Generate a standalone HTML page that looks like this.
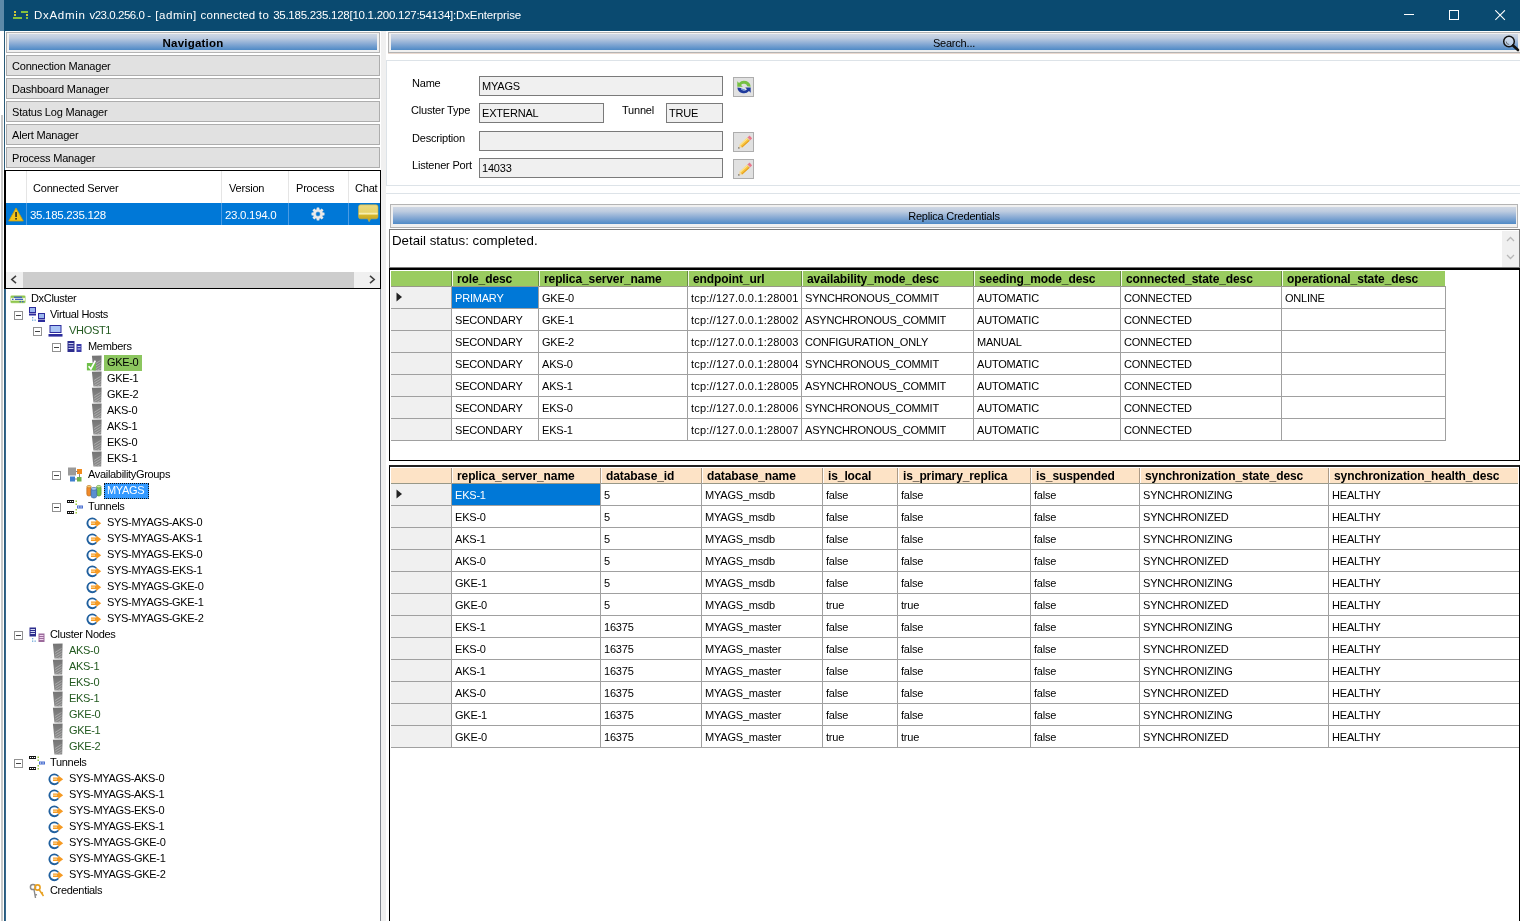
<!DOCTYPE html><html><head><meta charset="utf-8"><title>DxAdmin</title><style>
*{box-sizing:border-box;margin:0;padding:0}
html,body{width:1520px;height:921px;overflow:hidden;background:#fff}
body{will-change:transform;font-family:"Liberation Sans",sans-serif;font-size:11px;color:#000;position:relative;letter-spacing:-0.2px}
.a{position:absolute;white-space:nowrap}
.t{position:absolute;white-space:nowrap;line-height:14px;height:14px}
#title{left:4px;top:0;width:1516px;height:31px;background:#0a4a70}
#title .tx{left:30px;top:7px;color:#fff;font-size:11.5px;letter-spacing:0;line-height:16px}
.hdr{border:1px solid #b4b4b4;background:#f0f0f0}
.hdr .g{position:absolute;left:2px;right:2px;top:1px;bottom:2px;background:linear-gradient(#d0d8e4 0%,#becce0 25%,#88aad4 62%,#4f8ac6 100%)}
.nav{left:6px;width:374px;height:21px;border:1px solid #adadad;background:#e1e1e1}
.nav span{position:absolute;left:5px;top:3px;line-height:14px}
.tb{border:1px solid #7a7a7a;background:#f0f0f0;height:20px}
.tb span{position:absolute;left:2px;top:2px;line-height:14px}
.btn{border:1px solid #adadad;background:#e1e1e1;width:21px;height:20px}
</style></head><body>
<svg width="0" height="0" style="position:absolute"><defs><linearGradient id="ng" x1="0" y1="0" x2="0" y2="1"><stop offset="0" stop-color="#747474"/><stop offset="1" stop-color="#8c8c8c"/></linearGradient></defs></svg>
<div class="a" style="left:0;top:0;width:4px;height:31px;background:#5d8aa8"></div>
<div class="a" style="left:1px;top:115px;width:2px;height:806px;background:#c9c9c9"></div>
<div class="a" style="left:4px;top:31px;width:1px;height:890px;background:#2a5a78"></div>
<div class="a" style="left:4px;top:170px;width:2px;height:119px;background:#000"></div>
<div class="a" style="left:4px;top:289px;width:1px;height:632px;background:#2a5a78"></div>
<div id="title" class="a">
<svg class="a" style="left:8px;top:10px" width="16" height="10" viewBox="0 0 16 10"><g fill="#84c03c"><rect x="2" y="1" width="2" height="2" fill="#cfc63a"/><rect x="2" y="4" width="2" height="2" fill="#cfc63a"/><rect x="1" y="7" width="9" height="2"/><rect x="9" y="1" width="7" height="2"/><rect x="14" y="4" width="2" height="2" fill="#cfc63a"/><rect x="14" y="7" width="2" height="2"/></g></svg>
<div class="a tx" style="white-space:pre"><span style="letter-spacing:0.69px">DxAdmin </span><span style="letter-spacing:-0.46px">v23.0.256.0 </span><span style="letter-spacing:0.55px">- [admin] </span><span style="letter-spacing:0.2px">connected </span><span style="letter-spacing:0.5px">to </span><span style="letter-spacing:-0.26px">35.185.235.128[10.1.200.127:54134]</span><span style="letter-spacing:-0.12px">:DxEnterprise</span></div>
<svg class="a" style="left:1400px;top:8px" width="12" height="12"><path d="M0 6.5h10" stroke="#fff" stroke-width="1"/></svg>
<svg class="a" style="left:1445px;top:10px" width="12" height="12"><rect x="0.5" y="0.5" width="9" height="9" fill="none" stroke="#fff"/></svg>
<svg class="a" style="left:1491px;top:10px" width="12" height="12"><path d="M0.3 0.3l9.6 9.6M9.9 0.3l-9.6 9.6" stroke="#fff" stroke-width="1.1"/></svg>
</div>
<div class="a hdr" style="left:6px;top:32px;width:374px;height:21px"><div class="g"></div><div class="a" style="left:0;right:0;top:3px;text-align:center;font-weight:bold;font-size:11.5px;line-height:15px;letter-spacing:0.2px">Navigation</div></div>
<div class="a nav" style="top:55px"><span>Connection Manager</span></div>
<div class="a nav" style="top:78px"><span>Dashboard Manager</span></div>
<div class="a nav" style="top:101px"><span>Status Log Manager</span></div>
<div class="a nav" style="top:124px"><span>Alert Manager</span></div>
<div class="a nav" style="top:147px"><span>Process Manager</span></div>
<div class="a" style="left:5px;top:170px;width:376px;height:119px;border:1px solid #000;background:#fff">
<div class="a" style="left:20px;top:0;width:1px;height:32px;background:#e5e5e5"></div>
<div class="a" style="left:215px;top:0;width:1px;height:32px;background:#e5e5e5"></div>
<div class="a" style="left:282px;top:0;width:1px;height:32px;background:#e5e5e5"></div>
<div class="a" style="left:342px;top:0;width:1px;height:32px;background:#e5e5e5"></div>
<div class="t" style="left:27px;top:10px">Connected Server</div>
<div class="t" style="left:223px;top:10px">Version</div>
<div class="t" style="left:290px;top:10px">Process</div>
<div class="t" style="left:349px;top:10px">Chat</div>
<div class="a" style="left:0;top:32px;width:374px;height:22px;background:#0078d7"></div>
<div class="a" style="left:20px;top:32px;width:1px;height:22px;background:#4a9be3"></div>
<div class="a" style="left:215px;top:32px;width:1px;height:22px;background:#4a9be3"></div>
<div class="a" style="left:282px;top:32px;width:1px;height:22px;background:#4a9be3"></div>
<div class="a" style="left:342px;top:32px;width:1px;height:22px;background:#4a9be3"></div>
<div class="t" style="left:24px;top:37px;color:#fff;font-size:11.5px;letter-spacing:-0.3px">35.185.235.128</div>
<div class="t" style="left:219px;top:37px;color:#fff;font-size:11.5px;letter-spacing:-0.3px">23.0.194.0</div>
<svg class="a" style="left:2px;top:36px" width="16" height="15" viewBox="0 0 16 15"><path d="M8 1L15.3 14H0.7Z" fill="#f5c518" stroke="#c79a0a" stroke-width="0.8" stroke-linejoin="round"/><rect x="7.3" y="5" width="1.5" height="5" fill="#222"/><rect x="7.3" y="11" width="1.5" height="1.6" fill="#222"/></svg>
<svg class="a" style="left:305px;top:36px" width="14" height="14" viewBox="0 0 14 14"><g fill="#e9e9e9"><g><rect x="5.6" y="0.5" width="2.8" height="3" rx="0.4"/><rect x="5.6" y="10.5" width="2.8" height="3" rx="0.4"/><rect x="0.5" y="5.6" width="3" height="2.8" rx="0.4"/><rect x="10.5" y="5.6" width="3" height="2.8" rx="0.4"/></g><g transform="rotate(45 7 7)"><rect x="5.6" y="0.5" width="2.8" height="3" rx="0.4"/><rect x="5.6" y="10.5" width="2.8" height="3" rx="0.4"/><rect x="0.5" y="5.6" width="3" height="2.8" rx="0.4"/><rect x="10.5" y="5.6" width="3" height="2.8" rx="0.4"/></g></g><circle cx="7" cy="7" r="3.5" fill="none" stroke="#e9e9e9" stroke-width="2.6"/><circle cx="7" cy="7" r="2.1" fill="none" stroke="#9db9d6" stroke-width="0.5"/></svg>
<svg class="a" style="left:352px;top:33px" width="21" height="19" viewBox="0 0 21 19"><defs><linearGradient id="cg" x1="0" y1="0" x2="0" y2="1"><stop offset="0" stop-color="#e9da85"/><stop offset="0.44" stop-color="#e6d36a"/><stop offset="0.50" stop-color="#f7f0b8"/><stop offset="0.56" stop-color="#f3e48c"/><stop offset="0.60" stop-color="#d4b62e"/><stop offset="1" stop-color="#c2a01a"/></linearGradient></defs><path d="M2.5 0.8h15.5a2 2 0 0 1 2 2v10a2 2 0 0 1-2 2h-5.3l-1.6 3-1.4-3H2.5a2 2 0 0 1-2-2v-10a2 2 0 0 1 2-2z" fill="url(#cg)" stroke="#c9b040" stroke-width="0.6"/></svg>
<div class="a" style="left:0;top:101px;width:374px;height:16px;background:#f0f0f0"></div>
<div class="a" style="left:17px;top:101px;width:331px;height:16px;background:#cdcdcd"></div>
<svg class="a" style="left:4px;top:104px" width="8" height="9"><path d="M6 0.8L1.8 4.5L6 8.2" fill="none" stroke="#404040" stroke-width="1.6"/></svg>
<svg class="a" style="left:362px;top:104px" width="8" height="9"><path d="M2 0.8L6.2 4.5L2 8.2" fill="none" stroke="#404040" stroke-width="1.6"/></svg>
</div>
<div class="a" style="left:5px;top:289px;width:376px;height:640px;border:1px solid #828790;border-top:none;border-left-color:#33678f;background:#fff"></div>
<div class="a" style="left:10px;top:291px;width:16px;height:16px"><svg width="16" height="16" viewBox="0 0 16 16"><rect x="0.3" y="4.2" width="15.4" height="8" rx="1.5" fill="#b7d98a"/><rect x="1" y="5" width="14" height="1.6" fill="#8fc74e"/><rect x="1" y="10" width="14" height="1.6" fill="#8fc74e"/><rect x="1" y="7" width="14" height="2.6" fill="#eef5e2"/><rect x="4" y="5.6" width="8" height="1.3" fill="#3f5fc0"/><rect x="5" y="7.7" width="8" height="1.3" fill="#3f5fc0"/><rect x="2" y="7.7" width="1.5" height="1.3" fill="#3f5fc0"/><rect x="9.5" y="10" width="1.5" height="1.3" fill="#3f5fc0"/><rect x="12" y="10" width="1.5" height="1.3" fill="#3f5fc0"/></svg></div>
<div class="t" style="left:31px;top:291px;color:#000;letter-spacing:-0.32px">DxCluster</div>
<svg class="a" style="left:14px;top:311px" width="9" height="9"><rect x="0.5" y="0.5" width="8" height="8" fill="#fff" stroke="#919191"/><path d="M2 4.5h5" stroke="#444"/></svg>
<div class="a" style="left:29px;top:307px;width:16px;height:16px"><svg width="16" height="16" viewBox="0 0 16 16"><rect x="0.5" y="0.5" width="6" height="5" fill="#9bb7ee" stroke="#2c2c9c"/><rect x="0" y="6.5" width="7" height="2" fill="#2c2c9c"/><rect x="9.5" y="6.5" width="6" height="5" fill="#9bb7ee" stroke="#2c2c9c"/><rect x="9" y="12.5" width="7" height="2.5" fill="#2c2c9c"/><rect x="3" y="10" width="1.3" height="1.3" fill="#6aa5d8"/><rect x="3" y="12.5" width="1.3" height="1.3" fill="#6aa5d8"/><rect x="5.5" y="12.5" width="1.3" height="1.3" fill="#6aa5d8"/></svg></div>
<div class="t" style="left:50px;top:307px;color:#000;letter-spacing:-0.32px">Virtual Hosts</div>
<svg class="a" style="left:33px;top:327px" width="9" height="9"><rect x="0.5" y="0.5" width="8" height="8" fill="#fff" stroke="#919191"/><path d="M2 4.5h5" stroke="#444"/></svg>
<div class="a" style="left:48px;top:323px;width:16px;height:16px"><svg width="16" height="16" viewBox="0 0 16 16"><rect x="2" y="2.5" width="11" height="7" fill="#a9c4f5" stroke="#2c2c9c"/><rect x="0.5" y="11" width="14" height="2.6" fill="#2c2c9c"/></svg></div>
<div class="t" style="left:69px;top:323px;color:#22591f;letter-spacing:-0.32px">VHOST1</div>
<svg class="a" style="left:52px;top:343px" width="9" height="9"><rect x="0.5" y="0.5" width="8" height="8" fill="#fff" stroke="#919191"/><path d="M2 4.5h5" stroke="#444"/></svg>
<div class="a" style="left:67px;top:339px;width:16px;height:16px"><svg width="16" height="16" viewBox="0 0 16 16"><rect x="0.5" y="2" width="7" height="11" fill="#2c2c8c"/><rect x="1.5" y="4" width="5" height="1" fill="#cfd6f5"/><rect x="1.5" y="6.5" width="5" height="1" fill="#cfd6f5"/><rect x="1.5" y="9" width="5" height="1" fill="#cfd6f5"/><rect x="9.5" y="5" width="5" height="8" fill="#3a3aa8"/><rect x="10.5" y="7" width="3" height="1" fill="#cfd6f5"/><rect x="10.5" y="9.5" width="3" height="1" fill="#cfd6f5"/></svg></div>
<div class="t" style="left:88px;top:339px;color:#000;letter-spacing:-0.32px">Members</div>
<div class="a" style="left:86px;top:355px;width:16px;height:16px"><svg width="16" height="16" viewBox="0 0 16 16"><path d="M5.9 0.8L15.6 0.4L15.2 15.4L7.4 15.4Z" fill="url(#ng) #808080"/><path d="M8 9.5l6.5-4M8.2 12l6.5-4M8.4 14.5l6.4-4M11 15.4l3.9-2.4" stroke="#b4b4b4" stroke-width="0.8"/><rect x="0.9" y="8" width="9" height="7.4" fill="#6fbf4a"/><path d="M2.6 11.3l2.3 2.6L9.3 5.6" fill="none" stroke="#fff" stroke-width="1.7"/></svg></div>
<div class="a" style="left:104px;top:355px;width:38px;height:16px;background:#8cc65f"></div>
<div class="t" style="left:107px;top:355px;color:#000;letter-spacing:-0.32px">GKE-0</div>
<div class="a" style="left:86px;top:371px;width:16px;height:16px"><svg width="16" height="16" viewBox="0 0 16 16"><path d="M5.9 0.8L15.6 0.4L15.2 15.4L7.4 15.4Z" fill="url(#ng) #808080"/><path d="M8 9.5l6.5-4M8.2 12l6.5-4M8.4 14.5l6.4-4M11 15.4l3.9-2.4" stroke="#b4b4b4" stroke-width="0.8"/></svg></div>
<div class="t" style="left:107px;top:371px;color:#000;letter-spacing:-0.32px">GKE-1</div>
<div class="a" style="left:86px;top:387px;width:16px;height:16px"><svg width="16" height="16" viewBox="0 0 16 16"><path d="M5.9 0.8L15.6 0.4L15.2 15.4L7.4 15.4Z" fill="url(#ng) #808080"/><path d="M8 9.5l6.5-4M8.2 12l6.5-4M8.4 14.5l6.4-4M11 15.4l3.9-2.4" stroke="#b4b4b4" stroke-width="0.8"/></svg></div>
<div class="t" style="left:107px;top:387px;color:#000;letter-spacing:-0.32px">GKE-2</div>
<div class="a" style="left:86px;top:403px;width:16px;height:16px"><svg width="16" height="16" viewBox="0 0 16 16"><path d="M5.9 0.8L15.6 0.4L15.2 15.4L7.4 15.4Z" fill="url(#ng) #808080"/><path d="M8 9.5l6.5-4M8.2 12l6.5-4M8.4 14.5l6.4-4M11 15.4l3.9-2.4" stroke="#b4b4b4" stroke-width="0.8"/></svg></div>
<div class="t" style="left:107px;top:403px;color:#000;letter-spacing:-0.32px">AKS-0</div>
<div class="a" style="left:86px;top:419px;width:16px;height:16px"><svg width="16" height="16" viewBox="0 0 16 16"><path d="M5.9 0.8L15.6 0.4L15.2 15.4L7.4 15.4Z" fill="url(#ng) #808080"/><path d="M8 9.5l6.5-4M8.2 12l6.5-4M8.4 14.5l6.4-4M11 15.4l3.9-2.4" stroke="#b4b4b4" stroke-width="0.8"/></svg></div>
<div class="t" style="left:107px;top:419px;color:#000;letter-spacing:-0.32px">AKS-1</div>
<div class="a" style="left:86px;top:435px;width:16px;height:16px"><svg width="16" height="16" viewBox="0 0 16 16"><path d="M5.9 0.8L15.6 0.4L15.2 15.4L7.4 15.4Z" fill="url(#ng) #808080"/><path d="M8 9.5l6.5-4M8.2 12l6.5-4M8.4 14.5l6.4-4M11 15.4l3.9-2.4" stroke="#b4b4b4" stroke-width="0.8"/></svg></div>
<div class="t" style="left:107px;top:435px;color:#000;letter-spacing:-0.32px">EKS-0</div>
<div class="a" style="left:86px;top:451px;width:16px;height:16px"><svg width="16" height="16" viewBox="0 0 16 16"><path d="M5.9 0.8L15.6 0.4L15.2 15.4L7.4 15.4Z" fill="url(#ng) #808080"/><path d="M8 9.5l6.5-4M8.2 12l6.5-4M8.4 14.5l6.4-4M11 15.4l3.9-2.4" stroke="#b4b4b4" stroke-width="0.8"/></svg></div>
<div class="t" style="left:107px;top:451px;color:#000;letter-spacing:-0.32px">EKS-1</div>
<svg class="a" style="left:52px;top:471px" width="9" height="9"><rect x="0.5" y="0.5" width="8" height="8" fill="#fff" stroke="#919191"/><path d="M2 4.5h5" stroke="#444"/></svg>
<div class="a" style="left:67px;top:467px;width:16px;height:16px"><svg width="16" height="16" viewBox="0 0 16 16"><rect x="1" y="0.5" width="8" height="8" fill="#9a9a9a"/><rect x="10" y="2" width="5" height="5" fill="#f28b1d"/><rect x="3" y="9.5" width="5" height="5" fill="#3f7fd0"/><rect x="10" y="10" width="4.5" height="4.5" fill="#6bb04a"/><path d="M9 4.5h1.5M12.5 7v3M8 12h2" stroke="#777" stroke-width="0.9"/></svg></div>
<div class="t" style="left:88px;top:467px;color:#000;letter-spacing:-0.32px">AvailabilityGroups</div>
<div class="a" style="left:86px;top:483px;width:16px;height:16px"><svg width="16" height="16" viewBox="0 0 16 16"><rect x="0.8" y="3" width="4.4" height="10" rx="2" fill="#f08a2a" stroke="#b5620c" stroke-width="0.6"/><ellipse cx="3" cy="3.6" rx="2.2" ry="1.2" fill="#f9c777" stroke="#b56f10" stroke-width="0.5"/><rect x="10.5" y="3" width="4.6" height="10" rx="2" fill="#78c64c" stroke="#4e8f26" stroke-width="0.6"/><ellipse cx="12.8" cy="3.6" rx="2.3" ry="1.2" fill="#c9eaa0" stroke="#5a8f2a" stroke-width="0.5"/><rect x="5" y="5" width="5.8" height="10" rx="2.4" fill="#5b8fd0" stroke="#2d5c9c" stroke-width="0.6"/><ellipse cx="7.9" cy="5.8" rx="2.9" ry="1.4" fill="#a7c6ee" stroke="#2d5c9c" stroke-width="0.5"/></svg></div>
<div class="a" style="left:104px;top:483px;width:45px;height:16px;background:#3399ff;border:1px dotted #111"></div>
<div class="t" style="left:107px;top:483px;color:#fff;letter-spacing:-0.32px">MYAGS</div>
<svg class="a" style="left:52px;top:503px" width="9" height="9"><rect x="0.5" y="0.5" width="8" height="8" fill="#fff" stroke="#919191"/><path d="M2 4.5h5" stroke="#444"/></svg>
<div class="a" style="left:67px;top:499px;width:16px;height:16px"><svg width="16" height="16" viewBox="0 0 16 16"><rect x="0" y="1" width="7" height="3" fill="#111"/><rect x="1" y="2" width="1.2" height="1" fill="#fff"/><rect x="3" y="2" width="1.2" height="1" fill="#fff"/><rect x="5" y="2" width="1.2" height="1" fill="#fff"/><rect x="0" y="12" width="7" height="3" fill="#111"/><rect x="1" y="13" width="1.2" height="1" fill="#fff"/><rect x="3" y="13" width="1.2" height="1" fill="#fff"/><rect x="5" y="13" width="1.2" height="1" fill="#fff"/><rect x="8.5" y="1.5" width="1.5" height="1.5" fill="#9acb3c"/><rect x="8.5" y="4.5" width="1.5" height="1.5" fill="#9acb3c"/><rect x="8.5" y="10" width="1.5" height="1.5" fill="#9acb3c"/><rect x="8.5" y="13" width="1.5" height="1.5" fill="#9acb3c"/><rect x="10" y="6.5" width="6" height="3" fill="#4a6fd0"/><rect x="11" y="7.5" width="1.2" height="1" fill="#fff"/><rect x="13.5" y="7.5" width="1.2" height="1" fill="#fff"/></svg></div>
<div class="t" style="left:88px;top:499px;color:#000;letter-spacing:-0.32px">Tunnels</div>
<div class="a" style="left:86px;top:515px;width:16px;height:16px"><svg width="16" height="16" viewBox="0 0 16 16"><circle cx="6.3" cy="8.3" r="4.9" fill="#fff" stroke="#1f5f9e" stroke-width="1.9"/><path d="M9.5 5.4h6v5.8h-6z" fill="#fff"/><path d="M5 6.6h5.2V4.6l5 3.7-5 3.7V10H5Z" fill="#f59a23"/><path d="M5 7.4h4v1.6H5z" fill="#fbc77a"/></svg></div>
<div class="t" style="left:107px;top:515px;color:#000;letter-spacing:-0.32px">SYS-MYAGS-AKS-0</div>
<div class="a" style="left:86px;top:531px;width:16px;height:16px"><svg width="16" height="16" viewBox="0 0 16 16"><circle cx="6.3" cy="8.3" r="4.9" fill="#fff" stroke="#1f5f9e" stroke-width="1.9"/><path d="M9.5 5.4h6v5.8h-6z" fill="#fff"/><path d="M5 6.6h5.2V4.6l5 3.7-5 3.7V10H5Z" fill="#f59a23"/><path d="M5 7.4h4v1.6H5z" fill="#fbc77a"/></svg></div>
<div class="t" style="left:107px;top:531px;color:#000;letter-spacing:-0.32px">SYS-MYAGS-AKS-1</div>
<div class="a" style="left:86px;top:547px;width:16px;height:16px"><svg width="16" height="16" viewBox="0 0 16 16"><circle cx="6.3" cy="8.3" r="4.9" fill="#fff" stroke="#1f5f9e" stroke-width="1.9"/><path d="M9.5 5.4h6v5.8h-6z" fill="#fff"/><path d="M5 6.6h5.2V4.6l5 3.7-5 3.7V10H5Z" fill="#f59a23"/><path d="M5 7.4h4v1.6H5z" fill="#fbc77a"/></svg></div>
<div class="t" style="left:107px;top:547px;color:#000;letter-spacing:-0.32px">SYS-MYAGS-EKS-0</div>
<div class="a" style="left:86px;top:563px;width:16px;height:16px"><svg width="16" height="16" viewBox="0 0 16 16"><circle cx="6.3" cy="8.3" r="4.9" fill="#fff" stroke="#1f5f9e" stroke-width="1.9"/><path d="M9.5 5.4h6v5.8h-6z" fill="#fff"/><path d="M5 6.6h5.2V4.6l5 3.7-5 3.7V10H5Z" fill="#f59a23"/><path d="M5 7.4h4v1.6H5z" fill="#fbc77a"/></svg></div>
<div class="t" style="left:107px;top:563px;color:#000;letter-spacing:-0.32px">SYS-MYAGS-EKS-1</div>
<div class="a" style="left:86px;top:579px;width:16px;height:16px"><svg width="16" height="16" viewBox="0 0 16 16"><circle cx="6.3" cy="8.3" r="4.9" fill="#fff" stroke="#1f5f9e" stroke-width="1.9"/><path d="M9.5 5.4h6v5.8h-6z" fill="#fff"/><path d="M5 6.6h5.2V4.6l5 3.7-5 3.7V10H5Z" fill="#f59a23"/><path d="M5 7.4h4v1.6H5z" fill="#fbc77a"/></svg></div>
<div class="t" style="left:107px;top:579px;color:#000;letter-spacing:-0.32px">SYS-MYAGS-GKE-0</div>
<div class="a" style="left:86px;top:595px;width:16px;height:16px"><svg width="16" height="16" viewBox="0 0 16 16"><circle cx="6.3" cy="8.3" r="4.9" fill="#fff" stroke="#1f5f9e" stroke-width="1.9"/><path d="M9.5 5.4h6v5.8h-6z" fill="#fff"/><path d="M5 6.6h5.2V4.6l5 3.7-5 3.7V10H5Z" fill="#f59a23"/><path d="M5 7.4h4v1.6H5z" fill="#fbc77a"/></svg></div>
<div class="t" style="left:107px;top:595px;color:#000;letter-spacing:-0.32px">SYS-MYAGS-GKE-1</div>
<div class="a" style="left:86px;top:611px;width:16px;height:16px"><svg width="16" height="16" viewBox="0 0 16 16"><circle cx="6.3" cy="8.3" r="4.9" fill="#fff" stroke="#1f5f9e" stroke-width="1.9"/><path d="M9.5 5.4h6v5.8h-6z" fill="#fff"/><path d="M5 6.6h5.2V4.6l5 3.7-5 3.7V10H5Z" fill="#f59a23"/><path d="M5 7.4h4v1.6H5z" fill="#fbc77a"/></svg></div>
<div class="t" style="left:107px;top:611px;color:#000;letter-spacing:-0.32px">SYS-MYAGS-GKE-2</div>
<svg class="a" style="left:14px;top:631px" width="9" height="9"><rect x="0.5" y="0.5" width="8" height="8" fill="#fff" stroke="#919191"/><path d="M2 4.5h5" stroke="#444"/></svg>
<div class="a" style="left:29px;top:627px;width:16px;height:16px"><svg width="16" height="16" viewBox="0 0 16 16"><rect x="0.5" y="0.5" width="6.5" height="9" fill="#2c2c8c"/><rect x="1.5" y="2" width="4.5" height="1" fill="#d5daf5"/><rect x="1.5" y="4" width="4.5" height="1" fill="#d5daf5"/><rect x="1.5" y="6" width="4.5" height="1" fill="#d5daf5"/><rect x="9.5" y="6.5" width="6" height="8.5" fill="#9c6a9c"/><rect x="10.5" y="8" width="4" height="1" fill="#f0d5ee"/><rect x="10.5" y="10" width="4" height="1" fill="#f0d5ee"/><rect x="10.5" y="12" width="4" height="1" fill="#f0d5ee"/><rect x="3" y="11" width="1.3" height="1.3" fill="#6aa5d8"/><rect x="3" y="13.5" width="1.3" height="1.3" fill="#6aa5d8"/><rect x="5.5" y="13.5" width="1.3" height="1.3" fill="#6aa5d8"/></svg></div>
<div class="t" style="left:50px;top:627px;color:#000;letter-spacing:-0.32px">Cluster Nodes</div>
<div class="a" style="left:47px;top:643px;width:16px;height:16px"><svg width="16" height="16" viewBox="0 0 16 16"><path d="M5.9 0.8L15.6 0.4L15.2 15.4L7.4 15.4Z" fill="url(#ng) #808080"/><path d="M8 9.5l6.5-4M8.2 12l6.5-4M8.4 14.5l6.4-4M11 15.4l3.9-2.4" stroke="#b4b4b4" stroke-width="0.8"/></svg></div>
<div class="t" style="left:69px;top:643px;color:#22591f;letter-spacing:-0.32px">AKS-0</div>
<div class="a" style="left:47px;top:659px;width:16px;height:16px"><svg width="16" height="16" viewBox="0 0 16 16"><path d="M5.9 0.8L15.6 0.4L15.2 15.4L7.4 15.4Z" fill="url(#ng) #808080"/><path d="M8 9.5l6.5-4M8.2 12l6.5-4M8.4 14.5l6.4-4M11 15.4l3.9-2.4" stroke="#b4b4b4" stroke-width="0.8"/></svg></div>
<div class="t" style="left:69px;top:659px;color:#22591f;letter-spacing:-0.32px">AKS-1</div>
<div class="a" style="left:47px;top:675px;width:16px;height:16px"><svg width="16" height="16" viewBox="0 0 16 16"><path d="M5.9 0.8L15.6 0.4L15.2 15.4L7.4 15.4Z" fill="url(#ng) #808080"/><path d="M8 9.5l6.5-4M8.2 12l6.5-4M8.4 14.5l6.4-4M11 15.4l3.9-2.4" stroke="#b4b4b4" stroke-width="0.8"/></svg></div>
<div class="t" style="left:69px;top:675px;color:#22591f;letter-spacing:-0.32px">EKS-0</div>
<div class="a" style="left:47px;top:691px;width:16px;height:16px"><svg width="16" height="16" viewBox="0 0 16 16"><path d="M5.9 0.8L15.6 0.4L15.2 15.4L7.4 15.4Z" fill="url(#ng) #808080"/><path d="M8 9.5l6.5-4M8.2 12l6.5-4M8.4 14.5l6.4-4M11 15.4l3.9-2.4" stroke="#b4b4b4" stroke-width="0.8"/></svg></div>
<div class="t" style="left:69px;top:691px;color:#22591f;letter-spacing:-0.32px">EKS-1</div>
<div class="a" style="left:47px;top:707px;width:16px;height:16px"><svg width="16" height="16" viewBox="0 0 16 16"><path d="M5.9 0.8L15.6 0.4L15.2 15.4L7.4 15.4Z" fill="url(#ng) #808080"/><path d="M8 9.5l6.5-4M8.2 12l6.5-4M8.4 14.5l6.4-4M11 15.4l3.9-2.4" stroke="#b4b4b4" stroke-width="0.8"/></svg></div>
<div class="t" style="left:69px;top:707px;color:#22591f;letter-spacing:-0.32px">GKE-0</div>
<div class="a" style="left:47px;top:723px;width:16px;height:16px"><svg width="16" height="16" viewBox="0 0 16 16"><path d="M5.9 0.8L15.6 0.4L15.2 15.4L7.4 15.4Z" fill="url(#ng) #808080"/><path d="M8 9.5l6.5-4M8.2 12l6.5-4M8.4 14.5l6.4-4M11 15.4l3.9-2.4" stroke="#b4b4b4" stroke-width="0.8"/></svg></div>
<div class="t" style="left:69px;top:723px;color:#22591f;letter-spacing:-0.32px">GKE-1</div>
<div class="a" style="left:47px;top:739px;width:16px;height:16px"><svg width="16" height="16" viewBox="0 0 16 16"><path d="M5.9 0.8L15.6 0.4L15.2 15.4L7.4 15.4Z" fill="url(#ng) #808080"/><path d="M8 9.5l6.5-4M8.2 12l6.5-4M8.4 14.5l6.4-4M11 15.4l3.9-2.4" stroke="#b4b4b4" stroke-width="0.8"/></svg></div>
<div class="t" style="left:69px;top:739px;color:#22591f;letter-spacing:-0.32px">GKE-2</div>
<svg class="a" style="left:14px;top:759px" width="9" height="9"><rect x="0.5" y="0.5" width="8" height="8" fill="#fff" stroke="#919191"/><path d="M2 4.5h5" stroke="#444"/></svg>
<div class="a" style="left:29px;top:755px;width:16px;height:16px"><svg width="16" height="16" viewBox="0 0 16 16"><rect x="0" y="1" width="7" height="3" fill="#111"/><rect x="1" y="2" width="1.2" height="1" fill="#fff"/><rect x="3" y="2" width="1.2" height="1" fill="#fff"/><rect x="5" y="2" width="1.2" height="1" fill="#fff"/><rect x="0" y="12" width="7" height="3" fill="#111"/><rect x="1" y="13" width="1.2" height="1" fill="#fff"/><rect x="3" y="13" width="1.2" height="1" fill="#fff"/><rect x="5" y="13" width="1.2" height="1" fill="#fff"/><rect x="8.5" y="1.5" width="1.5" height="1.5" fill="#9acb3c"/><rect x="8.5" y="4.5" width="1.5" height="1.5" fill="#9acb3c"/><rect x="8.5" y="10" width="1.5" height="1.5" fill="#9acb3c"/><rect x="8.5" y="13" width="1.5" height="1.5" fill="#9acb3c"/><rect x="10" y="6.5" width="6" height="3" fill="#4a6fd0"/><rect x="11" y="7.5" width="1.2" height="1" fill="#fff"/><rect x="13.5" y="7.5" width="1.2" height="1" fill="#fff"/></svg></div>
<div class="t" style="left:50px;top:755px;color:#000;letter-spacing:-0.32px">Tunnels</div>
<div class="a" style="left:48px;top:771px;width:16px;height:16px"><svg width="16" height="16" viewBox="0 0 16 16"><circle cx="6.3" cy="8.3" r="4.9" fill="#fff" stroke="#1f5f9e" stroke-width="1.9"/><path d="M9.5 5.4h6v5.8h-6z" fill="#fff"/><path d="M5 6.6h5.2V4.6l5 3.7-5 3.7V10H5Z" fill="#f59a23"/><path d="M5 7.4h4v1.6H5z" fill="#fbc77a"/></svg></div>
<div class="t" style="left:69px;top:771px;color:#000;letter-spacing:-0.32px">SYS-MYAGS-AKS-0</div>
<div class="a" style="left:48px;top:787px;width:16px;height:16px"><svg width="16" height="16" viewBox="0 0 16 16"><circle cx="6.3" cy="8.3" r="4.9" fill="#fff" stroke="#1f5f9e" stroke-width="1.9"/><path d="M9.5 5.4h6v5.8h-6z" fill="#fff"/><path d="M5 6.6h5.2V4.6l5 3.7-5 3.7V10H5Z" fill="#f59a23"/><path d="M5 7.4h4v1.6H5z" fill="#fbc77a"/></svg></div>
<div class="t" style="left:69px;top:787px;color:#000;letter-spacing:-0.32px">SYS-MYAGS-AKS-1</div>
<div class="a" style="left:48px;top:803px;width:16px;height:16px"><svg width="16" height="16" viewBox="0 0 16 16"><circle cx="6.3" cy="8.3" r="4.9" fill="#fff" stroke="#1f5f9e" stroke-width="1.9"/><path d="M9.5 5.4h6v5.8h-6z" fill="#fff"/><path d="M5 6.6h5.2V4.6l5 3.7-5 3.7V10H5Z" fill="#f59a23"/><path d="M5 7.4h4v1.6H5z" fill="#fbc77a"/></svg></div>
<div class="t" style="left:69px;top:803px;color:#000;letter-spacing:-0.32px">SYS-MYAGS-EKS-0</div>
<div class="a" style="left:48px;top:819px;width:16px;height:16px"><svg width="16" height="16" viewBox="0 0 16 16"><circle cx="6.3" cy="8.3" r="4.9" fill="#fff" stroke="#1f5f9e" stroke-width="1.9"/><path d="M9.5 5.4h6v5.8h-6z" fill="#fff"/><path d="M5 6.6h5.2V4.6l5 3.7-5 3.7V10H5Z" fill="#f59a23"/><path d="M5 7.4h4v1.6H5z" fill="#fbc77a"/></svg></div>
<div class="t" style="left:69px;top:819px;color:#000;letter-spacing:-0.32px">SYS-MYAGS-EKS-1</div>
<div class="a" style="left:48px;top:835px;width:16px;height:16px"><svg width="16" height="16" viewBox="0 0 16 16"><circle cx="6.3" cy="8.3" r="4.9" fill="#fff" stroke="#1f5f9e" stroke-width="1.9"/><path d="M9.5 5.4h6v5.8h-6z" fill="#fff"/><path d="M5 6.6h5.2V4.6l5 3.7-5 3.7V10H5Z" fill="#f59a23"/><path d="M5 7.4h4v1.6H5z" fill="#fbc77a"/></svg></div>
<div class="t" style="left:69px;top:835px;color:#000;letter-spacing:-0.32px">SYS-MYAGS-GKE-0</div>
<div class="a" style="left:48px;top:851px;width:16px;height:16px"><svg width="16" height="16" viewBox="0 0 16 16"><circle cx="6.3" cy="8.3" r="4.9" fill="#fff" stroke="#1f5f9e" stroke-width="1.9"/><path d="M9.5 5.4h6v5.8h-6z" fill="#fff"/><path d="M5 6.6h5.2V4.6l5 3.7-5 3.7V10H5Z" fill="#f59a23"/><path d="M5 7.4h4v1.6H5z" fill="#fbc77a"/></svg></div>
<div class="t" style="left:69px;top:851px;color:#000;letter-spacing:-0.32px">SYS-MYAGS-GKE-1</div>
<div class="a" style="left:48px;top:867px;width:16px;height:16px"><svg width="16" height="16" viewBox="0 0 16 16"><circle cx="6.3" cy="8.3" r="4.9" fill="#fff" stroke="#1f5f9e" stroke-width="1.9"/><path d="M9.5 5.4h6v5.8h-6z" fill="#fff"/><path d="M5 6.6h5.2V4.6l5 3.7-5 3.7V10H5Z" fill="#f59a23"/><path d="M5 7.4h4v1.6H5z" fill="#fbc77a"/></svg></div>
<div class="t" style="left:69px;top:867px;color:#000;letter-spacing:-0.32px">SYS-MYAGS-GKE-2</div>
<div class="a" style="left:29px;top:883px;width:16px;height:16px"><svg width="16" height="16" viewBox="0 0 16 16"><circle cx="4" cy="4" r="2.6" fill="none" stroke="#8a8a8a" stroke-width="1.5"/><path d="M5 6.5l1.5 8.5M6.2 12l1.8-.4" stroke="#8a8a8a" stroke-width="1.4"/><circle cx="8.5" cy="4.5" r="2.6" fill="none" stroke="#e8a020" stroke-width="1.6"/><path d="M10 6.5l4.5 6.5M12.3 10.5l1.6-1" stroke="#e8a020" stroke-width="1.5"/></svg></div>
<div class="t" style="left:50px;top:883px;color:#000;letter-spacing:-0.32px">Credentials</div>
<div class="a" style="left:381px;top:31px;width:5px;height:890px;background:#f0f0f0"></div>
<div class="a hdr" style="left:388px;top:32px;width:1133px;height:21px"><div class="g"></div><div class="a" style="left:0;width:1130px;top:3px;text-align:center;line-height:14px">Search...</div><svg class="a" style="left:1113px;top:1px" width="18" height="18" viewBox="0 0 18 18"><circle cx="7" cy="7.5" r="5.3" fill="#dfe8f3" fill-opacity="0.6" stroke="#111" stroke-width="1.5"/><path d="M4.2 7.5a3 3 0 0 0 3 3" fill="none" stroke="#555" stroke-width="0.8"/><path d="M11 11.5l5 4.5" stroke="#111" stroke-width="2.6" stroke-linecap="round"/></svg></div>
<div class="a" style="left:388px;top:53px;width:1132px;height:1px;background:#ead9d0"></div>
<div class="a" style="left:386px;top:60px;width:1140px;height:126px;border:1px solid #dde3e8;background:#fff"></div>
<div class="a" style="left:386px;top:193px;width:1140px;height:1px;background:#dde3e8"></div>
<div class="t" style="left:412px;top:76px">Name</div>
<div class="t" style="left:411px;top:103px">Cluster Type</div>
<div class="t" style="left:622px;top:103px">Tunnel</div>
<div class="t" style="left:412px;top:131px">Description</div>
<div class="t" style="left:412px;top:158px">Listener Port</div>
<div class="a tb" style="left:479px;top:76px;width:244px"><span>MYAGS</span></div>
<div class="a tb" style="left:479px;top:103px;width:125px"><span>EXTERNAL</span></div>
<div class="a tb" style="left:666px;top:103px;width:57px"><span>TRUE</span></div>
<div class="a tb" style="left:479px;top:131px;width:244px"></div>
<div class="a tb" style="left:479px;top:158px;width:244px"><span>14033</span></div>
<div class="a btn" style="left:733px;top:77px"><svg class="a" style="left:3px;top:2px" width="14" height="14" viewBox="0 0 14 14"><path d="M0.3 1.2V6.8H5.8L4 5A3.4 3 0 0 1 10.2 6.2L13.6 6.8A6.6 6.2 0 0 0 2 2.9Z" fill="#76c043"/><path d="M13.7 12.8V7.4H8.2L10 9.2A3.4 3 0 0 1 3.8 8L0.4 7.4A6.6 6.2 0 0 0 12 11.1Z" fill="#1f3a9c"/><path d="M3.8 8A3.4 3 0 0 0 8.5 10.3L7.2 9A2 1.8 0 0 1 5 8.2Z" fill="#6f93d8"/></svg></div>
<div class="a btn" style="left:733px;top:132px"><svg class="a" style="left:2px;top:1px" width="16" height="16" viewBox="0 0 16 16"><g transform="translate(2.2,14.6) rotate(-42.5)"><path d="M0 0L3.6 -1.9V1.9Z" fill="#f1d8a8"/><path d="M0 0L1.4 -.75V.75Z" fill="#2b2b2b"/><rect x="3.6" y="-1.9" width="10.6" height="3.8" fill="#f8c53e"/><rect x="3.6" y="-1.9" width="10.6" height="1.2" fill="#fde596"/><rect x="3.6" y="0.9" width="10.6" height="1" fill="#e59d20"/><rect x="14.2" y="-1.9" width="3" height="3.8" fill="#e9788c"/><rect x="13.7" y="-1.9" width="0.8" height="3.8" fill="#d8d0c0"/></g></svg></div>
<div class="a btn" style="left:733px;top:159px"><svg class="a" style="left:2px;top:1px" width="16" height="16" viewBox="0 0 16 16"><g transform="translate(2.2,14.6) rotate(-42.5)"><path d="M0 0L3.6 -1.9V1.9Z" fill="#f1d8a8"/><path d="M0 0L1.4 -.75V.75Z" fill="#2b2b2b"/><rect x="3.6" y="-1.9" width="10.6" height="3.8" fill="#f8c53e"/><rect x="3.6" y="-1.9" width="10.6" height="1.2" fill="#fde596"/><rect x="3.6" y="0.9" width="10.6" height="1" fill="#e59d20"/><rect x="14.2" y="-1.9" width="3" height="3.8" fill="#e9788c"/><rect x="13.7" y="-1.9" width="0.8" height="3.8" fill="#d8d0c0"/></g></svg></div>
<div class="a hdr" style="left:390px;top:204px;width:1128px;height:24px"><div class="g" style="left:2px;right:1px;top:2px;bottom:3px"></div><div class="a" style="left:0;width:1126px;top:4px;text-align:center;line-height:14px">Replica Credentials</div></div>
<div class="a" style="left:389px;top:229px;width:1131px;height:39px;border:1px solid #7a7a7a;background:#fff"></div>
<div class="a" style="left:392px;top:233px;font-size:13.3px;line-height:16px;letter-spacing:0">Detail status: completed.</div>
<div class="a" style="left:1502px;top:231px;width:17px;height:36px;background:#f0f0f0"></div>
<svg class="a" style="left:1506px;top:236px" width="9" height="6"><path d="M1 5l3.5-3.5L8 5" fill="none" stroke="#b8b8b8" stroke-width="1.3"/></svg>
<svg class="a" style="left:1506px;top:254px" width="9" height="6"><path d="M1 1l3.5 3.5L8 1" fill="none" stroke="#b8b8b8" stroke-width="1.3"/></svg>
<div class="a" style="left:389px;top:268px;width:1131px;height:193px;border:1px solid #000;border-top:2px solid #000;background:#fff"></div>
<div class="a" style="left:391px;top:271px;width:1054px;height:15px;background:#9acc60"></div>
<div class="a" style="left:451px;top:271px;width:1px;height:15px;background:rgba(0,0,0,.32)"></div><div class="a" style="left:452px;top:271px;width:1px;height:15px;background:rgba(255,255,255,.85)"></div>
<div class="a" style="left:538px;top:271px;width:1px;height:15px;background:rgba(0,0,0,.32)"></div><div class="a" style="left:539px;top:271px;width:1px;height:15px;background:rgba(255,255,255,.85)"></div>
<div class="a" style="left:687px;top:271px;width:1px;height:15px;background:rgba(0,0,0,.32)"></div><div class="a" style="left:688px;top:271px;width:1px;height:15px;background:rgba(255,255,255,.85)"></div>
<div class="a" style="left:801px;top:271px;width:1px;height:15px;background:rgba(0,0,0,.32)"></div><div class="a" style="left:802px;top:271px;width:1px;height:15px;background:rgba(255,255,255,.85)"></div>
<div class="a" style="left:973px;top:271px;width:1px;height:15px;background:rgba(0,0,0,.32)"></div><div class="a" style="left:974px;top:271px;width:1px;height:15px;background:rgba(255,255,255,.85)"></div>
<div class="a" style="left:1120px;top:271px;width:1px;height:15px;background:rgba(0,0,0,.32)"></div><div class="a" style="left:1121px;top:271px;width:1px;height:15px;background:rgba(255,255,255,.85)"></div>
<div class="a" style="left:1281px;top:271px;width:1px;height:15px;background:rgba(0,0,0,.32)"></div><div class="a" style="left:1282px;top:271px;width:1px;height:15px;background:rgba(255,255,255,.85)"></div>
<div class="t" style="left:457px;top:272px;font-weight:bold;font-size:12px;letter-spacing:-0.1px">role_desc</div>
<div class="t" style="left:544px;top:272px;font-weight:bold;font-size:12px;letter-spacing:-0.1px">replica_server_name</div>
<div class="t" style="left:693px;top:272px;font-weight:bold;font-size:12px;letter-spacing:-0.1px">endpoint_url</div>
<div class="t" style="left:807px;top:272px;font-weight:bold;font-size:12px;letter-spacing:-0.1px">availability_mode_desc</div>
<div class="t" style="left:979px;top:272px;font-weight:bold;font-size:12px;letter-spacing:-0.1px">seeding_mode_desc</div>
<div class="t" style="left:1126px;top:272px;font-weight:bold;font-size:12px;letter-spacing:-0.1px">connected_state_desc</div>
<div class="t" style="left:1287px;top:272px;font-weight:bold;font-size:12px;letter-spacing:-0.1px">operational_state_desc</div>
<div class="a" style="left:391px;top:286px;width:60px;height:154px;background:#f0f0f0"></div>
<div class="a" style="left:391px;top:286px;width:1054px;height:1px;background:#989888"></div>
<div class="a" style="left:391px;top:308px;width:1055px;height:1px;background:#a0a0a0"></div>
<div class="a" style="left:391px;top:330px;width:1055px;height:1px;background:#a0a0a0"></div>
<div class="a" style="left:391px;top:352px;width:1055px;height:1px;background:#a0a0a0"></div>
<div class="a" style="left:391px;top:374px;width:1055px;height:1px;background:#a0a0a0"></div>
<div class="a" style="left:391px;top:396px;width:1055px;height:1px;background:#a0a0a0"></div>
<div class="a" style="left:391px;top:418px;width:1055px;height:1px;background:#a0a0a0"></div>
<div class="a" style="left:391px;top:440px;width:1055px;height:1px;background:#a0a0a0"></div>
<div class="a" style="left:451px;top:286px;width:1px;height:155px;background:#a0a0a0"></div>
<div class="a" style="left:538px;top:286px;width:1px;height:155px;background:#a0a0a0"></div>
<div class="a" style="left:687px;top:286px;width:1px;height:155px;background:#a0a0a0"></div>
<div class="a" style="left:801px;top:286px;width:1px;height:155px;background:#a0a0a0"></div>
<div class="a" style="left:973px;top:286px;width:1px;height:155px;background:#a0a0a0"></div>
<div class="a" style="left:1120px;top:286px;width:1px;height:155px;background:#a0a0a0"></div>
<div class="a" style="left:1281px;top:286px;width:1px;height:155px;background:#a0a0a0"></div>
<div class="a" style="left:1445px;top:286px;width:1px;height:155px;background:#a0a0a0"></div>
<div class="a" style="left:452px;top:287px;width:86px;height:21px;background:#0078d7"></div>
<svg class="a" style="left:396px;top:292px" width="7" height="10"><path d="M0.5 0.5L6 5L0.5 9.5Z" fill="#222"/></svg>
<div class="t" style="left:455px;top:291px;color:#fff">PRIMARY</div>
<div class="t" style="left:542px;top:291px;color:#000">GKE-0</div>
<div class="t" style="left:691px;top:291px;color:#000;letter-spacing:0.2px">tcp://127.0.0.1:28001</div>
<div class="t" style="left:805px;top:291px;color:#000">SYNCHRONOUS_COMMIT</div>
<div class="t" style="left:977px;top:291px;color:#000">AUTOMATIC</div>
<div class="t" style="left:1124px;top:291px;color:#000">CONNECTED</div>
<div class="t" style="left:1285px;top:291px;color:#000">ONLINE</div>
<div class="t" style="left:455px;top:313px;color:#000">SECONDARY</div>
<div class="t" style="left:542px;top:313px;color:#000">GKE-1</div>
<div class="t" style="left:691px;top:313px;color:#000;letter-spacing:0.2px">tcp://127.0.0.1:28002</div>
<div class="t" style="left:805px;top:313px;color:#000">ASYNCHRONOUS_COMMIT</div>
<div class="t" style="left:977px;top:313px;color:#000">AUTOMATIC</div>
<div class="t" style="left:1124px;top:313px;color:#000">CONNECTED</div>
<div class="t" style="left:455px;top:335px;color:#000">SECONDARY</div>
<div class="t" style="left:542px;top:335px;color:#000">GKE-2</div>
<div class="t" style="left:691px;top:335px;color:#000;letter-spacing:0.2px">tcp://127.0.0.1:28003</div>
<div class="t" style="left:805px;top:335px;color:#000">CONFIGURATION_ONLY</div>
<div class="t" style="left:977px;top:335px;color:#000">MANUAL</div>
<div class="t" style="left:1124px;top:335px;color:#000">CONNECTED</div>
<div class="t" style="left:455px;top:357px;color:#000">SECONDARY</div>
<div class="t" style="left:542px;top:357px;color:#000">AKS-0</div>
<div class="t" style="left:691px;top:357px;color:#000;letter-spacing:0.2px">tcp://127.0.0.1:28004</div>
<div class="t" style="left:805px;top:357px;color:#000">SYNCHRONOUS_COMMIT</div>
<div class="t" style="left:977px;top:357px;color:#000">AUTOMATIC</div>
<div class="t" style="left:1124px;top:357px;color:#000">CONNECTED</div>
<div class="t" style="left:455px;top:379px;color:#000">SECONDARY</div>
<div class="t" style="left:542px;top:379px;color:#000">AKS-1</div>
<div class="t" style="left:691px;top:379px;color:#000;letter-spacing:0.2px">tcp://127.0.0.1:28005</div>
<div class="t" style="left:805px;top:379px;color:#000">ASYNCHRONOUS_COMMIT</div>
<div class="t" style="left:977px;top:379px;color:#000">AUTOMATIC</div>
<div class="t" style="left:1124px;top:379px;color:#000">CONNECTED</div>
<div class="t" style="left:455px;top:401px;color:#000">SECONDARY</div>
<div class="t" style="left:542px;top:401px;color:#000">EKS-0</div>
<div class="t" style="left:691px;top:401px;color:#000;letter-spacing:0.2px">tcp://127.0.0.1:28006</div>
<div class="t" style="left:805px;top:401px;color:#000">SYNCHRONOUS_COMMIT</div>
<div class="t" style="left:977px;top:401px;color:#000">AUTOMATIC</div>
<div class="t" style="left:1124px;top:401px;color:#000">CONNECTED</div>
<div class="t" style="left:455px;top:423px;color:#000">SECONDARY</div>
<div class="t" style="left:542px;top:423px;color:#000">EKS-1</div>
<div class="t" style="left:691px;top:423px;color:#000;letter-spacing:0.2px">tcp://127.0.0.1:28007</div>
<div class="t" style="left:805px;top:423px;color:#000">ASYNCHRONOUS_COMMIT</div>
<div class="t" style="left:977px;top:423px;color:#000">AUTOMATIC</div>
<div class="t" style="left:1124px;top:423px;color:#000">CONNECTED</div>
<div class="a" style="left:389px;top:465px;width:1131px;height:470px;border:1px solid #000;border-top:2px solid #222;background:#fff"></div>
<div class="a" style="left:391px;top:468px;width:1127px;height:15px;background:#fde3c6"></div>
<div class="a" style="left:451px;top:468px;width:1px;height:15px;background:rgba(0,0,0,.32)"></div><div class="a" style="left:452px;top:468px;width:1px;height:15px;background:rgba(255,255,255,.85)"></div>
<div class="a" style="left:600px;top:468px;width:1px;height:15px;background:rgba(0,0,0,.32)"></div><div class="a" style="left:601px;top:468px;width:1px;height:15px;background:rgba(255,255,255,.85)"></div>
<div class="a" style="left:701px;top:468px;width:1px;height:15px;background:rgba(0,0,0,.32)"></div><div class="a" style="left:702px;top:468px;width:1px;height:15px;background:rgba(255,255,255,.85)"></div>
<div class="a" style="left:822px;top:468px;width:1px;height:15px;background:rgba(0,0,0,.32)"></div><div class="a" style="left:823px;top:468px;width:1px;height:15px;background:rgba(255,255,255,.85)"></div>
<div class="a" style="left:897px;top:468px;width:1px;height:15px;background:rgba(0,0,0,.32)"></div><div class="a" style="left:898px;top:468px;width:1px;height:15px;background:rgba(255,255,255,.85)"></div>
<div class="a" style="left:1030px;top:468px;width:1px;height:15px;background:rgba(0,0,0,.32)"></div><div class="a" style="left:1031px;top:468px;width:1px;height:15px;background:rgba(255,255,255,.85)"></div>
<div class="a" style="left:1139px;top:468px;width:1px;height:15px;background:rgba(0,0,0,.32)"></div><div class="a" style="left:1140px;top:468px;width:1px;height:15px;background:rgba(255,255,255,.85)"></div>
<div class="a" style="left:1328px;top:468px;width:1px;height:15px;background:rgba(0,0,0,.32)"></div><div class="a" style="left:1329px;top:468px;width:1px;height:15px;background:rgba(255,255,255,.85)"></div>
<div class="t" style="left:457px;top:469px;font-weight:bold;font-size:12px;letter-spacing:-0.1px">replica_server_name</div>
<div class="t" style="left:606px;top:469px;font-weight:bold;font-size:12px;letter-spacing:-0.1px">database_id</div>
<div class="t" style="left:707px;top:469px;font-weight:bold;font-size:12px;letter-spacing:-0.1px">database_name</div>
<div class="t" style="left:828px;top:469px;font-weight:bold;font-size:12px;letter-spacing:-0.1px">is_local</div>
<div class="t" style="left:903px;top:469px;font-weight:bold;font-size:12px;letter-spacing:-0.1px">is_primary_replica</div>
<div class="t" style="left:1036px;top:469px;font-weight:bold;font-size:12px;letter-spacing:-0.1px">is_suspended</div>
<div class="t" style="left:1145px;top:469px;font-weight:bold;font-size:12px;letter-spacing:-0.1px">synchronization_state_desc</div>
<div class="t" style="left:1334px;top:469px;font-weight:bold;font-size:12px;letter-spacing:-0.1px">synchronization_health_desc</div>
<div class="a" style="left:391px;top:483px;width:60px;height:264px;background:#f0f0f0"></div>
<div class="a" style="left:391px;top:483px;width:1127px;height:1px;background:#989888"></div>
<div class="a" style="left:391px;top:505px;width:1128px;height:1px;background:#a0a0a0"></div>
<div class="a" style="left:391px;top:527px;width:1128px;height:1px;background:#a0a0a0"></div>
<div class="a" style="left:391px;top:549px;width:1128px;height:1px;background:#a0a0a0"></div>
<div class="a" style="left:391px;top:571px;width:1128px;height:1px;background:#a0a0a0"></div>
<div class="a" style="left:391px;top:593px;width:1128px;height:1px;background:#a0a0a0"></div>
<div class="a" style="left:391px;top:615px;width:1128px;height:1px;background:#a0a0a0"></div>
<div class="a" style="left:391px;top:637px;width:1128px;height:1px;background:#a0a0a0"></div>
<div class="a" style="left:391px;top:659px;width:1128px;height:1px;background:#a0a0a0"></div>
<div class="a" style="left:391px;top:681px;width:1128px;height:1px;background:#a0a0a0"></div>
<div class="a" style="left:391px;top:703px;width:1128px;height:1px;background:#a0a0a0"></div>
<div class="a" style="left:391px;top:725px;width:1128px;height:1px;background:#a0a0a0"></div>
<div class="a" style="left:391px;top:747px;width:1128px;height:1px;background:#a0a0a0"></div>
<div class="a" style="left:451px;top:483px;width:1px;height:265px;background:#a0a0a0"></div>
<div class="a" style="left:600px;top:483px;width:1px;height:265px;background:#a0a0a0"></div>
<div class="a" style="left:701px;top:483px;width:1px;height:265px;background:#a0a0a0"></div>
<div class="a" style="left:822px;top:483px;width:1px;height:265px;background:#a0a0a0"></div>
<div class="a" style="left:897px;top:483px;width:1px;height:265px;background:#a0a0a0"></div>
<div class="a" style="left:1030px;top:483px;width:1px;height:265px;background:#a0a0a0"></div>
<div class="a" style="left:1139px;top:483px;width:1px;height:265px;background:#a0a0a0"></div>
<div class="a" style="left:1328px;top:483px;width:1px;height:265px;background:#a0a0a0"></div>
<div class="a" style="left:452px;top:484px;width:148px;height:21px;background:#0078d7"></div>
<svg class="a" style="left:396px;top:489px" width="7" height="10"><path d="M0.5 0.5L6 5L0.5 9.5Z" fill="#222"/></svg>
<div class="t" style="left:455px;top:488px;color:#fff">EKS-1</div>
<div class="t" style="left:604px;top:488px;color:#000">5</div>
<div class="t" style="left:705px;top:488px;color:#000">MYAGS_msdb</div>
<div class="t" style="left:826px;top:488px;color:#000">false</div>
<div class="t" style="left:901px;top:488px;color:#000">false</div>
<div class="t" style="left:1034px;top:488px;color:#000">false</div>
<div class="t" style="left:1143px;top:488px;color:#000">SYNCHRONIZING</div>
<div class="t" style="left:1332px;top:488px;color:#000">HEALTHY</div>
<div class="t" style="left:455px;top:510px;color:#000">EKS-0</div>
<div class="t" style="left:604px;top:510px;color:#000">5</div>
<div class="t" style="left:705px;top:510px;color:#000">MYAGS_msdb</div>
<div class="t" style="left:826px;top:510px;color:#000">false</div>
<div class="t" style="left:901px;top:510px;color:#000">false</div>
<div class="t" style="left:1034px;top:510px;color:#000">false</div>
<div class="t" style="left:1143px;top:510px;color:#000">SYNCHRONIZED</div>
<div class="t" style="left:1332px;top:510px;color:#000">HEALTHY</div>
<div class="t" style="left:455px;top:532px;color:#000">AKS-1</div>
<div class="t" style="left:604px;top:532px;color:#000">5</div>
<div class="t" style="left:705px;top:532px;color:#000">MYAGS_msdb</div>
<div class="t" style="left:826px;top:532px;color:#000">false</div>
<div class="t" style="left:901px;top:532px;color:#000">false</div>
<div class="t" style="left:1034px;top:532px;color:#000">false</div>
<div class="t" style="left:1143px;top:532px;color:#000">SYNCHRONIZING</div>
<div class="t" style="left:1332px;top:532px;color:#000">HEALTHY</div>
<div class="t" style="left:455px;top:554px;color:#000">AKS-0</div>
<div class="t" style="left:604px;top:554px;color:#000">5</div>
<div class="t" style="left:705px;top:554px;color:#000">MYAGS_msdb</div>
<div class="t" style="left:826px;top:554px;color:#000">false</div>
<div class="t" style="left:901px;top:554px;color:#000">false</div>
<div class="t" style="left:1034px;top:554px;color:#000">false</div>
<div class="t" style="left:1143px;top:554px;color:#000">SYNCHRONIZED</div>
<div class="t" style="left:1332px;top:554px;color:#000">HEALTHY</div>
<div class="t" style="left:455px;top:576px;color:#000">GKE-1</div>
<div class="t" style="left:604px;top:576px;color:#000">5</div>
<div class="t" style="left:705px;top:576px;color:#000">MYAGS_msdb</div>
<div class="t" style="left:826px;top:576px;color:#000">false</div>
<div class="t" style="left:901px;top:576px;color:#000">false</div>
<div class="t" style="left:1034px;top:576px;color:#000">false</div>
<div class="t" style="left:1143px;top:576px;color:#000">SYNCHRONIZING</div>
<div class="t" style="left:1332px;top:576px;color:#000">HEALTHY</div>
<div class="t" style="left:455px;top:598px;color:#000">GKE-0</div>
<div class="t" style="left:604px;top:598px;color:#000">5</div>
<div class="t" style="left:705px;top:598px;color:#000">MYAGS_msdb</div>
<div class="t" style="left:826px;top:598px;color:#000">true</div>
<div class="t" style="left:901px;top:598px;color:#000">true</div>
<div class="t" style="left:1034px;top:598px;color:#000">false</div>
<div class="t" style="left:1143px;top:598px;color:#000">SYNCHRONIZED</div>
<div class="t" style="left:1332px;top:598px;color:#000">HEALTHY</div>
<div class="t" style="left:455px;top:620px;color:#000">EKS-1</div>
<div class="t" style="left:604px;top:620px;color:#000">16375</div>
<div class="t" style="left:705px;top:620px;color:#000">MYAGS_master</div>
<div class="t" style="left:826px;top:620px;color:#000">false</div>
<div class="t" style="left:901px;top:620px;color:#000">false</div>
<div class="t" style="left:1034px;top:620px;color:#000">false</div>
<div class="t" style="left:1143px;top:620px;color:#000">SYNCHRONIZING</div>
<div class="t" style="left:1332px;top:620px;color:#000">HEALTHY</div>
<div class="t" style="left:455px;top:642px;color:#000">EKS-0</div>
<div class="t" style="left:604px;top:642px;color:#000">16375</div>
<div class="t" style="left:705px;top:642px;color:#000">MYAGS_master</div>
<div class="t" style="left:826px;top:642px;color:#000">false</div>
<div class="t" style="left:901px;top:642px;color:#000">false</div>
<div class="t" style="left:1034px;top:642px;color:#000">false</div>
<div class="t" style="left:1143px;top:642px;color:#000">SYNCHRONIZED</div>
<div class="t" style="left:1332px;top:642px;color:#000">HEALTHY</div>
<div class="t" style="left:455px;top:664px;color:#000">AKS-1</div>
<div class="t" style="left:604px;top:664px;color:#000">16375</div>
<div class="t" style="left:705px;top:664px;color:#000">MYAGS_master</div>
<div class="t" style="left:826px;top:664px;color:#000">false</div>
<div class="t" style="left:901px;top:664px;color:#000">false</div>
<div class="t" style="left:1034px;top:664px;color:#000">false</div>
<div class="t" style="left:1143px;top:664px;color:#000">SYNCHRONIZING</div>
<div class="t" style="left:1332px;top:664px;color:#000">HEALTHY</div>
<div class="t" style="left:455px;top:686px;color:#000">AKS-0</div>
<div class="t" style="left:604px;top:686px;color:#000">16375</div>
<div class="t" style="left:705px;top:686px;color:#000">MYAGS_master</div>
<div class="t" style="left:826px;top:686px;color:#000">false</div>
<div class="t" style="left:901px;top:686px;color:#000">false</div>
<div class="t" style="left:1034px;top:686px;color:#000">false</div>
<div class="t" style="left:1143px;top:686px;color:#000">SYNCHRONIZED</div>
<div class="t" style="left:1332px;top:686px;color:#000">HEALTHY</div>
<div class="t" style="left:455px;top:708px;color:#000">GKE-1</div>
<div class="t" style="left:604px;top:708px;color:#000">16375</div>
<div class="t" style="left:705px;top:708px;color:#000">MYAGS_master</div>
<div class="t" style="left:826px;top:708px;color:#000">false</div>
<div class="t" style="left:901px;top:708px;color:#000">false</div>
<div class="t" style="left:1034px;top:708px;color:#000">false</div>
<div class="t" style="left:1143px;top:708px;color:#000">SYNCHRONIZING</div>
<div class="t" style="left:1332px;top:708px;color:#000">HEALTHY</div>
<div class="t" style="left:455px;top:730px;color:#000">GKE-0</div>
<div class="t" style="left:604px;top:730px;color:#000">16375</div>
<div class="t" style="left:705px;top:730px;color:#000">MYAGS_master</div>
<div class="t" style="left:826px;top:730px;color:#000">true</div>
<div class="t" style="left:901px;top:730px;color:#000">true</div>
<div class="t" style="left:1034px;top:730px;color:#000">false</div>
<div class="t" style="left:1143px;top:730px;color:#000">SYNCHRONIZED</div>
<div class="t" style="left:1332px;top:730px;color:#000">HEALTHY</div>
</body></html>
